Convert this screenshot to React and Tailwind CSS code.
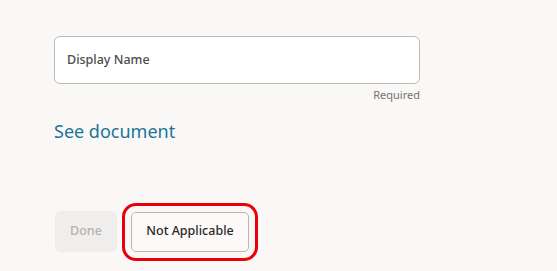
import React from "react";

export default function App() {
  return (
    <div
      className="w-[557px] h-[271px] bg-[#f9f8f6] pl-[54px] pt-[36px] overflow-hidden"
      style={{ fontFamily: '"Noto Sans", "Open Sans", sans-serif' }}
    >
      {/* Field */}
      <div className="w-[366px]">
        <div className="h-[48px] bg-white border border-[#bdbbb8] rounded-[6px] flex items-center pl-[12px]">
          <span className="text-[12.5px] font-medium text-[#4d4c4a]">
            Display Name
          </span>
        </div>
        <div className="text-right text-[11px] text-[#76746f] leading-none mt-[5px]">
          Required
        </div>
      </div>

      <div className="mt-[22px] text-[18px] leading-none text-[#1d7497]">
        See document
      </div>

      {/* Actions */}
      <div className="flex items-center gap-[14px] mt-[71px] pl-[1px]">
        <button className="w-[62px] h-[41px] rounded-[6px] bg-[#efeeec] text-[12.5px] font-medium text-[#b4b2ae]">
          Done
        </button>
        <button className="w-[118px] h-[40px] rounded-[5px] bg-[#fbfaf9] border border-[#b9b7b3] text-[12.5px] font-medium text-[#2b2a28] outline-[3px] outline-solid outline-[#e8000b] outline-offset-[6px]">
          Not Applicable
        </button>
      </div>
    </div>
  );
}
